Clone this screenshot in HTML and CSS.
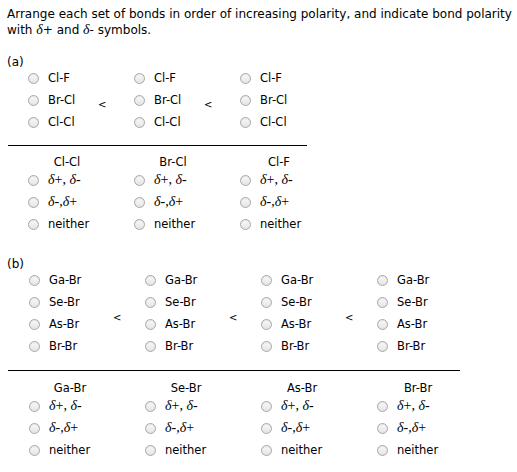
FILE: index.html
```html
<!DOCTYPE html>
<html>
<head>
<meta charset="utf-8">
<link rel="stylesheet" href="styles.css">
</head>
<body>
<div class="page">
  <p class="prompt">Arrange each set of bonds in order of increasing polarity, and indicate bond polarity<br>with <i class="d">δ</i>+ and <i class="d">δ</i>- symbols.</p>

  <div class="part part-a">(a)</div>
  <div class="order order-a">
    <div class="slot">
      <div class="stack">
        <label class="opt"><input type="radio" name="a1">Cl-F</label>
        <label class="opt"><input type="radio" name="a1">Br-Cl</label>
        <label class="opt"><input type="radio" name="a1">Cl-Cl</label>
      </div>
      <span class="lt">&lt;</span>
    </div>
    <div class="slot">
      <div class="stack">
        <label class="opt"><input type="radio" name="a2">Cl-F</label>
        <label class="opt"><input type="radio" name="a2">Br-Cl</label>
        <label class="opt"><input type="radio" name="a2">Cl-Cl</label>
      </div>
      <span class="lt">&lt;</span>
    </div>
    <div class="slot">
      <div class="stack">
        <label class="opt"><input type="radio" name="a3">Cl-F</label>
        <label class="opt"><input type="radio" name="a3">Br-Cl</label>
        <label class="opt"><input type="radio" name="a3">Cl-Cl</label>
      </div>
    </div>
  </div>
  <hr class="rule rule-a">
  <div class="polar polar-a">
    <div class="pcol">
      <div class="phead">Cl-Cl</div>
      <label class="opt"><input type="radio" name="pa1"><span class="dl"><i>δ</i>+, <i>δ</i>-</span></label>
      <label class="opt"><input type="radio" name="pa1"><span class="dl"><i>δ</i>-,<i>δ</i>+</span></label>
      <label class="opt"><input type="radio" name="pa1">neither</label>
    </div>
    <div class="pcol">
      <div class="phead">Br-Cl</div>
      <label class="opt"><input type="radio" name="pa2"><span class="dl"><i>δ</i>+, <i>δ</i>-</span></label>
      <label class="opt"><input type="radio" name="pa2"><span class="dl"><i>δ</i>-,<i>δ</i>+</span></label>
      <label class="opt"><input type="radio" name="pa2">neither</label>
    </div>
    <div class="pcol">
      <div class="phead">Cl-F</div>
      <label class="opt"><input type="radio" name="pa3"><span class="dl"><i>δ</i>+, <i>δ</i>-</span></label>
      <label class="opt"><input type="radio" name="pa3"><span class="dl"><i>δ</i>-,<i>δ</i>+</span></label>
      <label class="opt"><input type="radio" name="pa3">neither</label>
    </div>
  </div>

  <div class="part part-b">(b)</div>
  <div class="order order-b">
    <div class="slot">
      <div class="stack">
        <label class="opt"><input type="radio" name="b1">Ga-Br</label>
        <label class="opt"><input type="radio" name="b1">Se-Br</label>
        <label class="opt"><input type="radio" name="b1">As-Br</label>
        <label class="opt"><input type="radio" name="b1">Br-Br</label>
      </div>
      <span class="lt">&lt;</span>
    </div>
    <div class="slot">
      <div class="stack">
        <label class="opt"><input type="radio" name="b2">Ga-Br</label>
        <label class="opt"><input type="radio" name="b2">Se-Br</label>
        <label class="opt"><input type="radio" name="b2">As-Br</label>
        <label class="opt"><input type="radio" name="b2">Br-Br</label>
      </div>
      <span class="lt">&lt;</span>
    </div>
    <div class="slot">
      <div class="stack">
        <label class="opt"><input type="radio" name="b3">Ga-Br</label>
        <label class="opt"><input type="radio" name="b3">Se-Br</label>
        <label class="opt"><input type="radio" name="b3">As-Br</label>
        <label class="opt"><input type="radio" name="b3">Br-Br</label>
      </div>
      <span class="lt">&lt;</span>
    </div>
    <div class="slot">
      <div class="stack">
        <label class="opt"><input type="radio" name="b4">Ga-Br</label>
        <label class="opt"><input type="radio" name="b4">Se-Br</label>
        <label class="opt"><input type="radio" name="b4">As-Br</label>
        <label class="opt"><input type="radio" name="b4">Br-Br</label>
      </div>
    </div>
  </div>
  <hr class="rule rule-b">
  <div class="polar polar-b">
    <div class="pcol">
      <div class="phead">Ga-Br</div>
      <label class="opt"><input type="radio" name="pb1"><span class="dl"><i>δ</i>+, <i>δ</i>-</span></label>
      <label class="opt"><input type="radio" name="pb1"><span class="dl"><i>δ</i>-,<i>δ</i>+</span></label>
      <label class="opt"><input type="radio" name="pb1">neither</label>
    </div>
    <div class="pcol">
      <div class="phead">Se-Br</div>
      <label class="opt"><input type="radio" name="pb2"><span class="dl"><i>δ</i>+, <i>δ</i>-</span></label>
      <label class="opt"><input type="radio" name="pb2"><span class="dl"><i>δ</i>-,<i>δ</i>+</span></label>
      <label class="opt"><input type="radio" name="pb2">neither</label>
    </div>
    <div class="pcol">
      <div class="phead">As-Br</div>
      <label class="opt"><input type="radio" name="pb3"><span class="dl"><i>δ</i>+, <i>δ</i>-</span></label>
      <label class="opt"><input type="radio" name="pb3"><span class="dl"><i>δ</i>-,<i>δ</i>+</span></label>
      <label class="opt"><input type="radio" name="pb3">neither</label>
    </div>
    <div class="pcol">
      <div class="phead">Br-Br</div>
      <label class="opt"><input type="radio" name="pb4"><span class="dl"><i>δ</i>+, <i>δ</i>-</span></label>
      <label class="opt"><input type="radio" name="pb4"><span class="dl"><i>δ</i>-,<i>δ</i>+</span></label>
      <label class="opt"><input type="radio" name="pb4">neither</label>
    </div>
  </div>
</div>
</body>
</html>
```

FILE: styles.css
```css
html, body {
  margin: 0;
  background: #fff;
}

body {
  font-family: "DejaVu Sans", Verdana, sans-serif;
  font-size: 11.5px;
  color: #000;
}

.page {
  padding: 7px 0 0 7px;
}

.prompt {
  margin: 0;
  font-size: 12px;
  line-height: 15px;
  white-space: nowrap;
}

.d {
  font-family: "Liberation Serif", serif;
  font-size: 14px;
}

.part {
  line-height: 10px;
  font-size: 12px;
}

.part-a {
  margin-top: 19px;
}

.part-b {
  margin-top: 24px;
}

.order {
  display: grid;
}

.order-a {
  grid-template-columns: repeat(3, 106px);
  padding-left: 21px;
}

.order-b {
  grid-template-columns: repeat(4, 116px);
  padding-left: 22px;
}

.slot {
  display: flex;
}

.stack {
  display: flex;
  flex-direction: column;
}

.order-a .stack {
  width: 70px;
}

.order-b .stack {
  width: 84px;
}

.lt {
  align-self: center;
  padding-top: 8px;
  font-size: 10px;
}

.opt {
  display: flex;
  align-items: center;
  height: 22px;
  white-space: nowrap;
}

.opt input {
  appearance: none;
  -webkit-appearance: none;
  box-sizing: border-box;
  width: 11px;
  height: 11px;
  margin: 0 9px 0 0;
  border-radius: 50%;
  border: 1px solid #a8a8a8;
  background: linear-gradient(#fafafa, #e4e4e4);
  box-shadow: inset 0 1px 1px rgba(0, 0, 0, 0.08);
  flex: none;
}

.dl {
  font-family: "Liberation Serif", serif;
  font-size: 14px;
}

.rule {
  border: 0;
  border-top: 1px solid #000;
  margin: 0 0 0 1px;
  height: 0;
}

.rule-a {
  margin-top: 12px;
  width: 299px;
}

.rule-b {
  margin-top: 13px;
  width: 452px;
}

.polar {
  display: grid;
}

.polar-a {
  grid-template-columns: repeat(3, 106px);
  margin-left: 7px;
}

.polar-b {
  grid-template-columns: repeat(4, 116px);
  margin-left: 5px;
}

.pcol {
  display: flex;
  flex-direction: column;
}

.polar-a .opt {
  padding-left: 14px;
}

.polar-b .opt {
  padding-left: 17px;
}

.phead {
  text-align: center;
  line-height: 14px;
}

.polar-a .phead {
  margin-top: 9px;
}

.polar-b .phead {
  margin-top: 10px;
}
```
